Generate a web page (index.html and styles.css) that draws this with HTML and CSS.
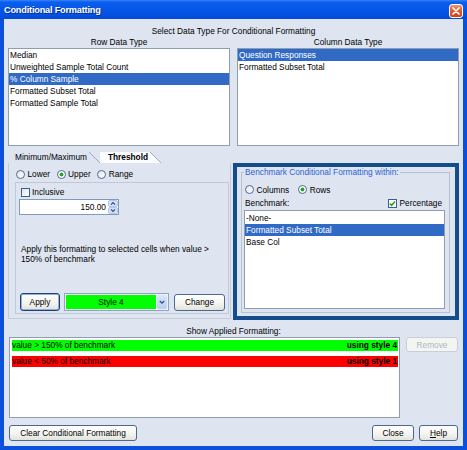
FILE: index.html
```html
<!DOCTYPE html>
<html>
<head>
<meta charset="utf-8">
<title>Conditional Formatting</title>
<link rel="stylesheet" href="styles.css">
</head>
<body>
<div class="window">
  <div class="titlebar">
    <span class="title">Conditional Formatting</span>
    <span class="close-x">
      <svg width="12" height="12" viewBox="0 0 12 12"><path d="M3 3 L9 9 M9 3 L3 9" stroke="#fff" stroke-width="1.7" stroke-linecap="round"/></svg>
    </span>
  </div>
  <div class="content">
    <div class="heading">Select Data Type For Conditional Formatting</div>
    <div class="types">
      <div class="type-col">
        <div class="col-label">Row Data Type</div>
        <ul class="list type-list">
          <li>Median</li>
          <li>Unweighted Sample Total Count</li>
          <li class="sel">% Column Sample</li>
          <li>Formatted Subset Total</li>
          <li>Formatted Sample Total</li>
        </ul>
      </div>
      <div class="type-col">
        <div class="col-label">Column Data Type</div>
        <ul class="list type-list">
          <li class="sel">Question Responses</li>
          <li>Formatted Subset Total</li>
        </ul>
      </div>
    </div>

    <div class="lower">
      <div class="tabbed">
        <div class="tabs">
          <span class="tab">Minimum/Maximum</span>
          <span class="tab active">Threshold</span>
        </div>
        <div class="tab-panel">
          <div class="radio-row">
            <span class="radio"><i class="dot"></i>Lower</span>
            <span class="radio"><i class="dot on"></i>Upper</span>
            <span class="radio"><i class="dot"></i>Range</span>
          </div>
          <div class="group">
            <div class="check-row"><i class="box"></i>Inclusive</div>
            <div class="spinner">
              <span class="val">150.00</span>
              <span class="spin-btns">
                <svg width="10" height="14" viewBox="0 0 10 14">
                  <rect x="0.5" y="0.5" width="9" height="6" rx="1.5" fill="#d3e0f6" stroke="#b3c6e8"/>
                  <rect x="0.5" y="7.5" width="9" height="6" rx="1.5" fill="#d3e0f6" stroke="#b3c6e8"/>
                  <path d="M3 4.6 L5 2.6 L7 4.6" stroke="#2b4d8c" stroke-width="1.2" fill="none"/>
                  <path d="M3 9.4 L5 11.4 L7 9.4" stroke="#2b4d8c" stroke-width="1.2" fill="none"/>
                </svg>
              </span>
            </div>
            <p class="desc">Apply this formatting to selected cells when value &gt; 150% of benchmark</p>
            <div class="btn-row">
              <button class="btn apply">Apply</button>
              <div class="combo">
                <span class="swatch">Style 4</span>
                <span class="combo-arrow">
                  <svg width="10" height="14" viewBox="0 0 10 14"><path d="M2.8 6 L5 8.2 L7.2 6" stroke="#2b4d8c" stroke-width="1.3" fill="none"/></svg>
                </span>
              </div>
              <button class="btn change">Change</button>
            </div>
          </div>
        </div>
      </div>

      <div class="bench">
        <fieldset class="bench-group">
          <legend>Benchmark Conditional Formatting within:</legend>
          <div class="bench-radios">
            <span class="radio"><i class="dot"></i>Columns</span>
            <span class="radio"><i class="dot on"></i>Rows</span>
          </div>
          <div class="bench-row">
            <span>Benchmark:</span>
            <span class="check"><i class="box checked"><svg width="9" height="9" viewBox="0 0 9 9"><path d="M1.8 4.4 L3.6 6.3 L7 2.4" stroke="#21a121" stroke-width="1.5" fill="none"/></svg></i>Percentage</span>
          </div>
          <ul class="list bench-list">
            <li>-None-</li>
            <li class="sel">Formatted Subset Total</li>
            <li>Base Col</li>
          </ul>
        </fieldset>
      </div>
    </div>

    <div class="applied-label">Show Applied Formatting:</div>
    <div class="applied">
      <div class="applied-list">
        <div class="rule green"><span>value &gt; 150% of benchmark</span><b>using style 4</b></div>
        <div class="rule red"><span>value &lt; 50% of benchmark</span><b>using style 1</b></div>
      </div>
      <button class="btn remove" disabled>Remove</button>
    </div>

    <div class="footer">
      <button class="btn clear">Clear Conditional Formatting</button>
      <div class="footer-right">
        <button class="btn close">Close</button>
        <button class="btn help"><u>H</u>elp</button>
      </div>
    </div>
  </div>
</div>
</body>
</html>
```

FILE: styles.css
```css
* { box-sizing: border-box; }
html, body { margin: 0; padding: 0; }
body {
  width: 467px;
  height: 450px;
  overflow: hidden;
  font-family: "Liberation Sans", Arial, sans-serif;
  font-size: 8.3px;
  color: #000;
  background: #fff;
}

.window {
  width: 467px;
  height: 450px;
  display: flex;
  flex-direction: column;
  background: #0b50dc;
}

.titlebar {
  flex: none;
  height: 19px;
  display: flex;
  justify-content: space-between;
  align-items: flex-start;
  padding: 0 4px 0 4px;
  background: linear-gradient(#3a86fa 0, #0b5eee 2px, #0558e8 8px, #0452e2 14px, #034bd8 19px);
}
.title {
  color: #fff;
  font-weight: bold;
  font-size: 9.2px;
  letter-spacing: -0.2px;
  line-height: 17px;
  padding-top: 2px;
  text-shadow: 1px 1px 0 #0a2f8e;
}
.close-x {
  width: 14px;
  height: 14px;
  margin-top: 4px;
  border: 1px solid #fff;
  border-radius: 3px;
  background: linear-gradient(#ef9677, #e05a32 45%, #cf4119);
  display: flex;
  align-items: center;
  justify-content: center;
}

.content {
  flex: 1;
  margin: 0 4px 4px 4px;
  background: #dee5f0;
  display: flex;
  flex-direction: column;
}

.heading {
  margin-top: 7px;
  line-height: 11px;
  text-align: center;
}

.types {
  display: grid;
  grid-template-columns: 222px 222px;
  column-gap: 7px;
  padding: 0 4px;
}
.col-label {
  line-height: 11px;
  text-align: center;
}

.list {
  margin: 0;
  padding: 0;
  list-style: none;
  background: #fff;
  border: 1px solid #8f9db2;
}
.list li {
  height: 12px;
  line-height: 12px;
  padding-left: 1px;
  white-space: nowrap;
}
.list li.sel {
  background: #316ac5;
  color: #fff;
}
.type-list { height: 98px; }

.lower {
  display: grid;
  grid-template-columns: 223px 226px;
  column-gap: 2px;
  padding: 0 4px;
  margin-top: 6px;
  align-items: start;
}

.tabs {
  display: flex;
  height: 11px;
}
.tab {
  position: relative;
  line-height: 11px;
  padding: 0 13px 0 7px;
  white-space: nowrap;
}
.tab::after {
  content: "";
  position: absolute;
  right: 0;
  top: 0;
  width: 11px;
  height: 11px;
  background: linear-gradient(to top right, transparent calc(50% - 0.6px), #9eaabb 50%, transparent calc(50% + 0.6px));
}
.tab.active {
  font-weight: bold;
  padding-left: 8px;
  background:
    linear-gradient(to top right, #fbfcfe 50%, transparent 50%) right top / 11px 100% no-repeat,
    linear-gradient(#fbfcfe, #fbfcfe) left top / calc(100% - 11px) 100% no-repeat;
}

.tab-panel {
  height: 156px;
  border: 1px solid #c3ccd8;
  border-top-color: transparent;
  padding-top: 4px;
  display: flex;
  flex-direction: column;
}

.radio-row {
  display: flex;
  height: 12px;
  align-items: center;
  padding-left: 7px;
  gap: 6.5px;
}
.radio {
  display: flex;
  align-items: center;
  gap: 2.5px;
  white-space: nowrap;
}
.dot {
  display: block;
  width: 9px;
  height: 9px;
  border-radius: 50%;
  border: 1px solid #4b6b96;
  background: linear-gradient(135deg, #e4e6ea, #ffffff);
}
.dot.on {
  background: radial-gradient(circle, #25a325 0, #25a325 1.6px, #ffffff 2.3px);
}
.box {
  display: block;
  width: 9px;
  height: 9px;
  border: 1px solid #3d5f8e;
  background: linear-gradient(135deg, #e2e4e8, #ffffff);
}
.box.checked {
  background: #fff;
}
.box.checked svg {
  display: block;
  margin: -1px 0 0 -1px;
}

.group {
  flex: none;
  height: 132px;
  margin: 2px 1px 0 6px;
  border: 1px solid #c0c9d6;
  padding-top: 4px;
  display: flex;
  flex-direction: column;
}
.check-row {
  display: flex;
  align-items: center;
  gap: 2px;
  height: 11px;
  line-height: 11px;
  margin-left: 5px;
}
.spinner {
  width: 100px;
  height: 16px;
  margin: 1px 0 0 3px;
  border: 1px solid #7f9db9;
  background: #fff;
  display: flex;
}
.spinner .val {
  flex: 1;
  text-align: right;
  padding-right: 2px;
  line-height: 14px;
}
.spin-btns {
  width: 10px;
  display: flex;
}
.desc {
  width: 200px;
  margin: 29px 0 0 5px;
  line-height: 10px;
}
.btn-row {
  margin-top: auto;
  display: flex;
  align-items: center;
  padding: 0 0 2px 4px;
}

.btn {
  font: inherit;
  color: #000;
  height: 16px;
  padding: 0;
  line-height: 14px;
  border: 1px solid #4a6891;
  border-radius: 3px;
  background: linear-gradient(#ffffff, #f4f4f1 55%, #e3e3dd);
  text-align: center;
}
.btn.apply {
  width: 40px;
  height: 18px;
  border-color: #1f3f75;
  box-shadow: inset 0 0 0 1px #8eafe2;
}
.combo {
  width: 105px;
  height: 18px;
  margin-left: 4px;
  border: 1px solid #8ea5c4;
  background: #eef2f8;
  padding: 1px;
  display: flex;
}
.swatch {
  flex: 1;
  background: #00ff00;
  text-align: center;
  line-height: 14px;
}
.combo-arrow {
  width: 10px;
  margin-left: 1px;
  border-radius: 2px;
  background: linear-gradient(#dbe6fa, #b9cdf2);
  display: flex;
}
.btn.change {
  width: 51px;
  height: 17px;
  margin-left: 5px;
}

.bench {
  margin-top: 11px;
  height: 157px;
  border: 4px solid #134e8a;
  padding: 0 5px 0 4px;
}
.bench-group {
  margin: 0;
  min-width: 0;
  border: 1px solid #b7c2d2;
  padding: 6px 4px 3px 2px;
}
.bench-group legend {
  padding: 0 1px;
  line-height: 11px;
  color: #2c5fd8;
}
.bench-radios {
  display: flex;
  height: 11px;
  align-items: center;
  padding-left: 1px;
  gap: 9px;
}
.bench-row {
  display: flex;
  justify-content: space-between;
  margin-top: 3px;
  height: 11px;
  line-height: 11px;
  padding: 0 3px 0 1px;
}
.check {
  display: flex;
  align-items: center;
  gap: 3px;
}
.bench-list {
  margin-top: 1px;
  height: 99px;
  padding-top: 1px;
}

.applied-label {
  margin-top: 6px;
  line-height: 11px;
  text-align: center;
}
.applied {
  display: flex;
  align-items: flex-start;
  gap: 6px;
  padding: 0 5px;
}
.applied-list {
  width: 391px;
  height: 81px;
  border: 1px solid #8f9db2;
  background: #fff;
  padding: 2px 1px 0 2px;
}
.rule {
  display: flex;
  justify-content: space-between;
  height: 11px;
  line-height: 11px;
  margin-bottom: 5px;
  padding-right: 1px;
  white-space: nowrap;
}
.rule.green { background: #00ff00; }
.rule.red { background: #ff0000; }
.btn.remove {
  width: 52px;
  height: 15px;
  color: #aeb6c2;
  border-color: #c8cfda;
  background: #f4f4f1;
}

.footer {
  display: flex;
  justify-content: space-between;
  padding: 0 5px;
  margin-top: 7px;
}
.footer-right {
  display: flex;
  gap: 5px;
}
.btn.clear { width: 128px; }
.btn.close { width: 42px; }
.btn.help { width: 39px; }
```
